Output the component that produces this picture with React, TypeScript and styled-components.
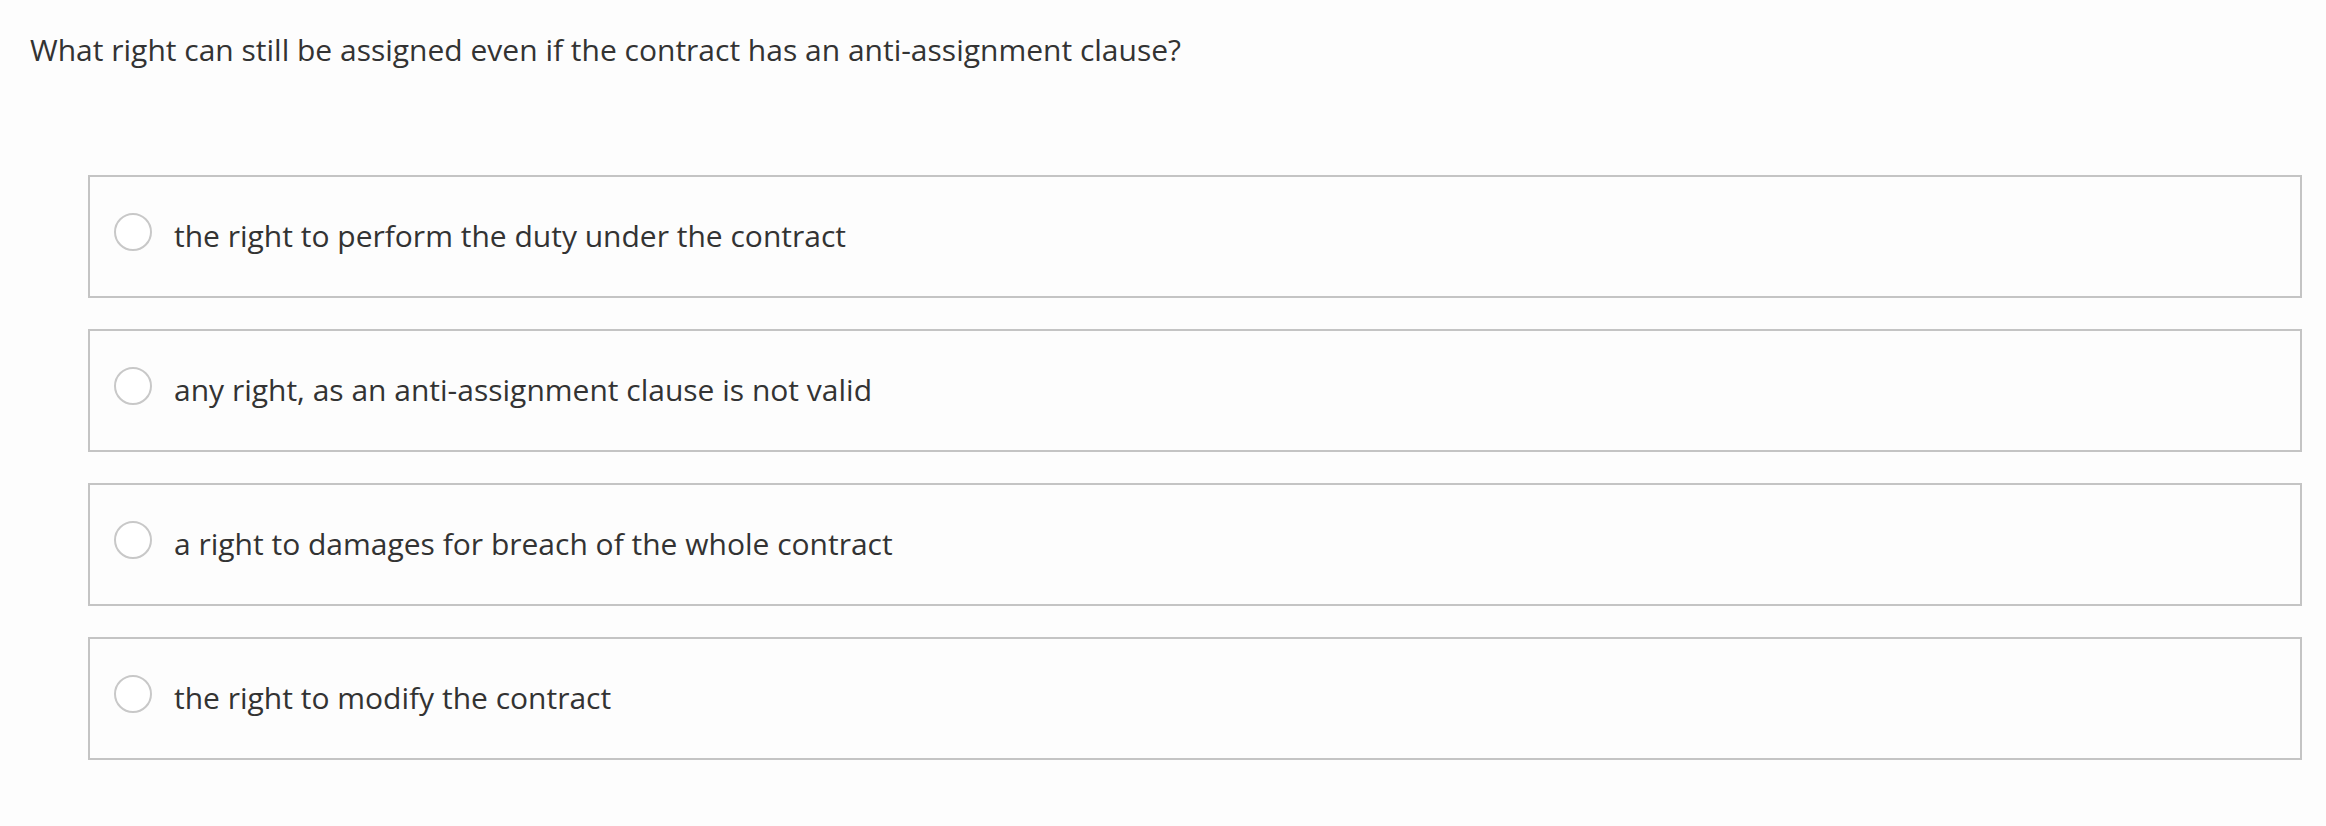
import React from "react";
import styled, { createGlobalStyle } from "styled-components";

const Global = createGlobalStyle`
  html, body { margin: 0; padding: 0; background: #fdfdfd; }
  body { font-family: "Open Sans", "Noto Sans", sans-serif; color: #333333; }
`;

const Page = styled.div`
  display: flex;
  flex-direction: column;
  padding: 26px 24px 40px 30px;
`;

const Question = styled.div`
  font-size: 30px;
  line-height: 48px;
  color: #333333;
  margin-bottom: 101px;
`;

const Options = styled.div`
  display: flex;
  flex-direction: column;
  gap: 31px;
  margin-left: 58px;
`;

const Option = styled.label`
  display: flex;
  align-items: center;
  gap: 22px;
  height: 123px;
  box-sizing: border-box;
  border: 2px solid #c4c4c4;
  background: #fdfdfd;
  padding: 0 24px 10px 24px;
  cursor: pointer;
`;

const Radio = styled.span`
  width: 38px;
  height: 38px;
  box-sizing: border-box;
  border-radius: 50%;
  border: 2px solid #c8c8c8;
  background: #ffffff;
  flex-shrink: 0;
`;

const OptionText = styled.span`
  font-size: 30px;
  color: #333333;
  line-height: 40px;
  padding-top: 8px;
`;

const options = [
  "the right to perform the duty under the contract",
  "any right, as an anti-assignment clause is not valid",
  "a right to damages for breach of the whole contract",
  "the right to modify the contract",
];

export default function App() {
  return (
    <>
      <Global />
      <Page>
        <Question>
          What right can still be assigned even if the contract has an anti-assignment clause?
        </Question>
        <Options>
          {options.map((o) => (
            <Option key={o}>
              <Radio />
              <OptionText>{o}</OptionText>
            </Option>
          ))}
        </Options>
      </Page>
    </>
  );
}
